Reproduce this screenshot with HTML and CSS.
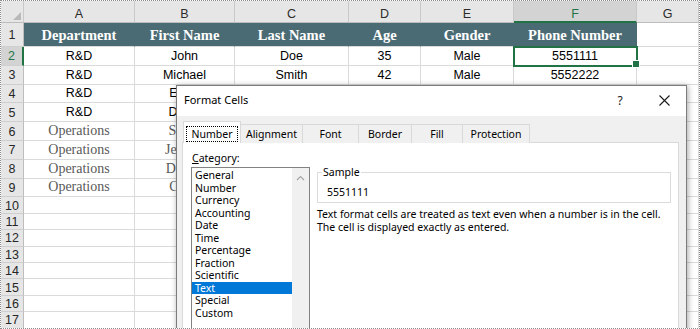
FILE: index.html
```html
<!DOCTYPE html>
<html>
<head>
<meta charset="utf-8">
<title>Format Cells</title>
<link rel="stylesheet" href="styles.css">
</head>
<body>
<div class="frame">
  <div class="sheet">
    <div class="ch corner"><svg width="8" height="8" viewBox="0 0 8 8"><path d="M8 0 L8 8 L0 8 Z" fill="#b9b9b9"/></svg></div>
    <div class="ch">A</div><div class="ch">B</div><div class="ch">C</div><div class="ch">D</div><div class="ch">E</div><div class="ch sel">F</div><div class="ch">G</div>

    <div class="rh">1</div><div class="c h1">Department</div><div class="c h1">First Name</div><div class="c h1">Last Name</div><div class="c h1">Age</div><div class="c h1">Gender</div><div class="c h1">Phone Number</div><div class="c"></div>

    <div class="rh sel">2</div><div class="c">R&amp;D</div><div class="c">John</div><div class="c">Doe</div><div class="c">35</div><div class="c">Male</div><div class="c active">5551111</div><div class="c"></div>

    <div class="rh">3</div><div class="c">R&amp;D</div><div class="c">Michael</div><div class="c">Smith</div><div class="c">42</div><div class="c">Male</div><div class="c">5552222</div><div class="c"></div>

    <div class="rh">4</div><div class="c">R&amp;D</div><div class="c">Emily</div><div class="c"></div><div class="c"></div><div class="c"></div><div class="c"></div><div class="c"></div>

    <div class="rh">5</div><div class="c">R&amp;D</div><div class="c">David</div><div class="c"></div><div class="c"></div><div class="c"></div><div class="c"></div><div class="c"></div>

    <div class="rh">6</div><div class="c op">Operations</div><div class="c op">Sarah</div><div class="c"></div><div class="c"></div><div class="c"></div><div class="c"></div><div class="c"></div>

    <div class="rh">7</div><div class="c op">Operations</div><div class="c op">Jessica</div><div class="c"></div><div class="c"></div><div class="c"></div><div class="c"></div><div class="c"></div>

    <div class="rh">8</div><div class="c op">Operations</div><div class="c op">Daniel</div><div class="c"></div><div class="c"></div><div class="c"></div><div class="c"></div><div class="c"></div>

    <div class="rh">9</div><div class="c op">Operations</div><div class="c op">Chris</div><div class="c"></div><div class="c"></div><div class="c"></div><div class="c"></div><div class="c"></div>

    <div class="rh">10</div><div class="c"></div><div class="c"></div><div class="c"></div><div class="c"></div><div class="c"></div><div class="c"></div><div class="c"></div>
    <div class="rh">11</div><div class="c"></div><div class="c"></div><div class="c"></div><div class="c"></div><div class="c"></div><div class="c"></div><div class="c"></div>
    <div class="rh">12</div><div class="c"></div><div class="c"></div><div class="c"></div><div class="c"></div><div class="c"></div><div class="c"></div><div class="c"></div>
    <div class="rh">13</div><div class="c"></div><div class="c"></div><div class="c"></div><div class="c"></div><div class="c"></div><div class="c"></div><div class="c"></div>
    <div class="rh">14</div><div class="c"></div><div class="c"></div><div class="c"></div><div class="c"></div><div class="c"></div><div class="c"></div><div class="c"></div>
    <div class="rh">15</div><div class="c"></div><div class="c"></div><div class="c"></div><div class="c"></div><div class="c"></div><div class="c"></div><div class="c"></div>
    <div class="rh">16</div><div class="c"></div><div class="c"></div><div class="c"></div><div class="c"></div><div class="c"></div><div class="c"></div><div class="c"></div>
    <div class="rh">17</div><div class="c"></div><div class="c"></div><div class="c"></div><div class="c"></div><div class="c"></div><div class="c"></div><div class="c"></div>
  </div>

  <div class="dialog">
    <div class="titlebar">
      <span class="title">Format Cells</span>
      <span class="tbtn help">?</span>
      <span class="tbtn close"><svg width="11" height="11" viewBox="0 0 11 11"><path d="M0.5 0.5 L10.5 10.5 M10.5 0.5 L0.5 10.5" stroke="#1a1a1a" stroke-width="1.1" fill="none"/></svg></span>
    </div>
    <div class="tabs">
      <div class="tab current t-number"><span class="focus">Number</span></div>
      <div class="tab t-align">Alignment</div>
      <div class="tab t-font">Font</div>
      <div class="tab t-border">Border</div>
      <div class="tab t-fill">Fill</div>
      <div class="tab t-prot">Protection</div>
    </div>
    <div class="panel">
      <div class="catcol">
        <div class="catlabel"><u>C</u>ategory:</div>
        <div class="listbox">
          <ul class="items">
            <li>General</li>
            <li>Number</li>
            <li>Currency</li>
            <li>Accounting</li>
            <li>Date</li>
            <li>Time</li>
            <li>Percentage</li>
            <li>Fraction</li>
            <li>Scientific</li>
            <li class="picked">Text</li>
            <li>Special</li>
            <li>Custom</li>
          </ul>
          <div class="vscroll"><svg width="9" height="6" viewBox="0 0 9 6"><path d="M1 5 L4.5 1.5 L8 5" stroke="#a6a6a6" stroke-width="1.2" fill="none"/></svg></div>
        </div>
      </div>
      <div class="detail">
        <fieldset class="sample">
          <legend>Sample</legend>
          <div class="sampleval">5551111</div>
        </fieldset>
        <p class="desc">Text format cells are treated as text even when a number is in the cell.<br>The cell is displayed exactly as entered.</p>
      </div>
    </div>
  </div>
</div>
</body>
</html>
```

FILE: styles.css
```css
* { box-sizing: border-box; }

body {
  margin: 0;
  background: #ffffff;
}

.frame {
  position: relative;
  width: 700px;
  height: 329px;
  border: 1px dotted #8c8c8c;
  overflow: hidden;
  background: #ffffff;
}

/* ---------- spreadsheet ---------- */
.sheet {
  display: grid;
  grid-template-columns: 23px 111px 100px 114px 72px 93px 123px 62px;
  grid-template-rows: 22px 24px repeat(8, 18.8px) repeat(8, 16.4px);
  font-family: "Liberation Sans", Arial, sans-serif;
  font-size: 12.5px;
  color: #000;
}

.sheet > div {
  display: flex;
  align-items: center;
  justify-content: center;
  border-right: 1px solid #dadada;
  border-bottom: 1px solid #dadada;
  white-space: nowrap;
  overflow: hidden;
}

.ch {
  background: #e6e6e6;
  border-right-color: #c9c9c9 !important;
  border-bottom-color: #bdbdbd !important;
  font-size: 12.5px;
  color: #2b2b2b;
  padding-top: 5px;
}

.ch.corner {
  justify-content: flex-end;
  align-items: flex-end !important;
  padding: 0 2px 2px 0;
}

.ch.sel {
  background: #d3d3d3;
  color: #217346;
  border-bottom: 2px solid #217346 !important;
  padding-top: 6px;
}

.rh {
  background: #e6e6e6;
  border-right-color: #bdbdbd !important;
  border-bottom-color: #cfcfcf !important;
  font-size: 12.5px;
  color: #262626;
  padding-top: 1px;
}

.rh.sel {
  background: #d3d3d3;
  color: #217346;
  border-right: 2px solid #217346 !important;
}

.c.h1 {
  background: #4b6b74;
  border-right-color: #4b6b74;
  color: #ffffff;
  font-family: "Liberation Serif", "Times New Roman", serif;
  font-weight: bold;
  font-size: 14.5px;
  padding-top: 1px;
}

.c.op {
  font-family: "Liberation Serif", "Times New Roman", serif;
  font-size: 14px;
  color: #595959;
}

.c.active {
  position: relative;
  overflow: visible;
  outline: 2px solid #217346;
  outline-offset: -1px;
  z-index: 1;
}

.c.active::after {
  content: "";
  position: absolute;
  right: -4px;
  bottom: -3px;
  width: 6px;
  height: 6px;
  background: #217346;
  border: 1px solid #ffffff;
}

/* ---------- dialog ---------- */
.dialog {
  position: absolute;
  left: 175px;
  top: 84px;
  width: 511px;
  height: 262px;
  background: #f0f0f0;
  border: 1px solid #7c7c7c;
  box-shadow: 1px 1px 6px rgba(0, 0, 0, 0.35);
  font-family: "Noto Sans", "Open Sans", sans-serif;
  font-size: 10.5px;
  color: #000;
  z-index: 5;
}

.titlebar {
  height: 30px;
  background: #ffffff;
  display: flex;
  align-items: center;
  padding-left: 7px;
  padding-bottom: 2px;
}

.title {
  flex: 1;
  font-size: 11px;
  line-height: 14px;
  color: #000;
}

.tbtn {
  width: 44px;
  height: 28px;
  display: flex;
  align-items: center;
  justify-content: center;
}

.help {
  font-size: 12px;
  color: #1a1a1a;
  padding-top: 1px;
}

.tabs {
  display: flex;
  align-items: flex-end;
  height: 22px;
  margin-top: 5px;
  padding-left: 6px;
  position: relative;
  z-index: 2;
}

.tab {
  height: 19px;
  display: flex;
  align-items: center;
  justify-content: center;
  background: #f0f0f0;
  border: 1px solid #d9d9d9;
  border-bottom: none;
  margin-left: -1px;
  color: #000;
}

.tab:first-child { margin-left: 0; }

.tab.current {
  height: 22px;
  background: #ffffff;
  padding-top: 2px;
  position: relative;
  z-index: 1;
}

.focus {
  border: 1px dotted #000;
  padding: 0 4px;
  line-height: 14px;
}

.t-number { width: 58px; }
.t-align { width: 63px; }
.t-font { width: 57px; }
.t-border { width: 54px; }
.t-fill { width: 52px; }
.t-prot { width: 68px; }

.panel {
  margin: -1px 7px 0 5px;
  height: 200px;
  background: #ffffff;
  border: 1px solid #d9d9d9;
  display: flex;
  padding-left: 8px;
}

.catcol {
  width: 119px;
  display: flex;
  flex-direction: column;
}

.catlabel {
  margin-top: 9px;
  margin-left: 1px;
  line-height: 13px;
  height: 15px;
}

.catlabel u { text-decoration-thickness: 1px; text-underline-offset: 1px; }

.listbox {
  flex: 1;
  border: 1px solid #828282;
  display: flex;
  background: #ffffff;
}

.items {
  list-style: none;
  margin: 0;
  padding: 1px 0 0 0;
  flex: 1;
}

.items li {
  height: 12.5px;
  line-height: 12.5px;
  padding-left: 3px;
}

.items li.picked {
  background: #0078d7;
  color: #ffffff;
}

.vscroll {
  width: 17px;
  background: #f0f0f0;
  display: flex;
  justify-content: center;
  align-items: flex-start;
  padding-top: 7px;
}

.detail {
  margin-left: 7px;
  width: 354px;
}

.sample {
  margin: 23px 0 0 0;
  padding: 7px 4px 3px 4px;
  border: 1px solid #dcdcdc;
  min-width: 0;
}

.sample legend {
  padding: 0 1px;
  line-height: 13px;
  color: #000;
}

.sampleval {
  line-height: 13px;
  padding-left: 5px;
}

.desc {
  margin: 5px 0 0 0;
  line-height: 13px;
  white-space: nowrap;
}
```
